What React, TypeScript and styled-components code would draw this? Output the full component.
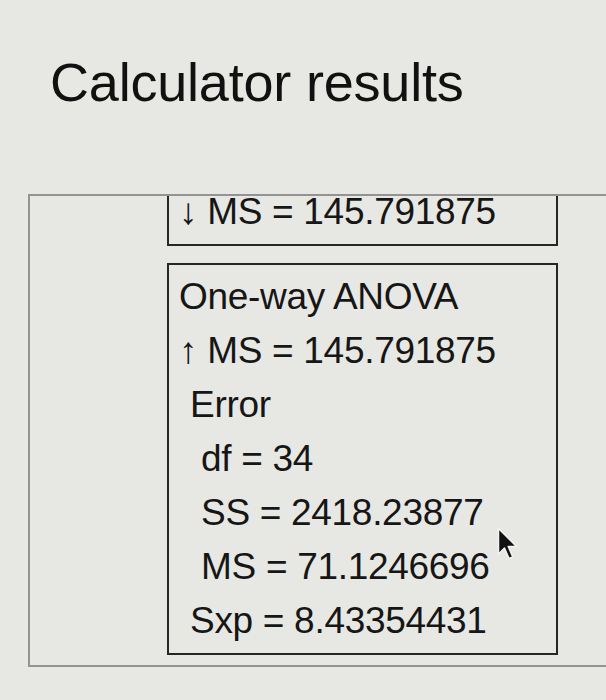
import React from "react";
import styled, { createGlobalStyle } from "styled-components";

const Global = createGlobalStyle`
  html, body {
    margin: 0;
    padding: 0;
    background: #e7e8e3;
  }
  body {
    font-family: "Liberation Sans", Arial, sans-serif;
    color: #161616;
  }
`;

const Page = styled.div`
  position: relative;
  width: 606px;
  height: 700px;
  overflow: hidden;
  display: flex;
  flex-direction: column;
`;

const Title = styled.h1`
  margin: 52px 0 0 50px;
  font-size: 54px;
  line-height: 60px;
  font-weight: 400;
  color: #111;
  letter-spacing: -0.2px;
`;

const Panel = styled.section`
  margin: 82px -20px 0 28px;
  height: 469px;
  border: 2px solid #939393;
  overflow: hidden;
  padding-left: 137px;
`;

const List = styled.div`
  margin-top: -18px;
  width: 391px;
  display: flex;
  flex-direction: column;
  gap: 17px;
`;

const ResultBox = styled.div`
  border: 2px solid #262626;
  padding: 5px 10px;
  display: flex;
  flex-direction: column;
`;

const Line = styled.div<{ $indent?: number }>`
  font-size: 37px;
  line-height: 54px;
  white-space: nowrap;
  letter-spacing: -0.3px;
  padding-left: ${(p) => (p.$indent ?? 0) * 11}px;
  color: #161616;
`;

const Cursor = styled.svg`
  position: absolute;
  left: 497px;
  top: 527px;
  width: 24px;
  height: 36px;
`;

type Row = { text: string; indent?: number };

const prev: Row[] = [{ text: "\u2193 MS = 145.791875" }];

const anova: Row[] = [
  { text: "One-way ANOVA" },
  { text: "\u2191 MS = 145.791875" },
  { text: "Error", indent: 1 },
  { text: "df = 34", indent: 2 },
  { text: "SS = 2418.23877", indent: 2 },
  { text: "MS = 71.1246696", indent: 2 },
  { text: "Sxp = 8.43354431", indent: 1 },
];

function Result({ rows }: { rows: Row[] }) {
  return (
    <ResultBox>
      {rows.map((r, i) => (
        <Line key={i} $indent={r.indent}>
          {r.text}
        </Line>
      ))}
    </ResultBox>
  );
}

export default function App() {
  return (
    <Page>
      <Global />
      <Title>Calculator results</Title>
      <Panel>
        <List>
          <Result rows={prev} />
          <Result rows={anova} />
        </List>
      </Panel>
      <Cursor viewBox="0 0 16 24">
        <path
          d="M1 1 L1 18 L5 14 L8 21 L10.5 20 L7.5 13 L13 13 Z"
          fill="#111"
          stroke="#f2f2f2"
          strokeWidth="1"
          strokeLinejoin="round"
        />
      </Cursor>
    </Page>
  );
}
